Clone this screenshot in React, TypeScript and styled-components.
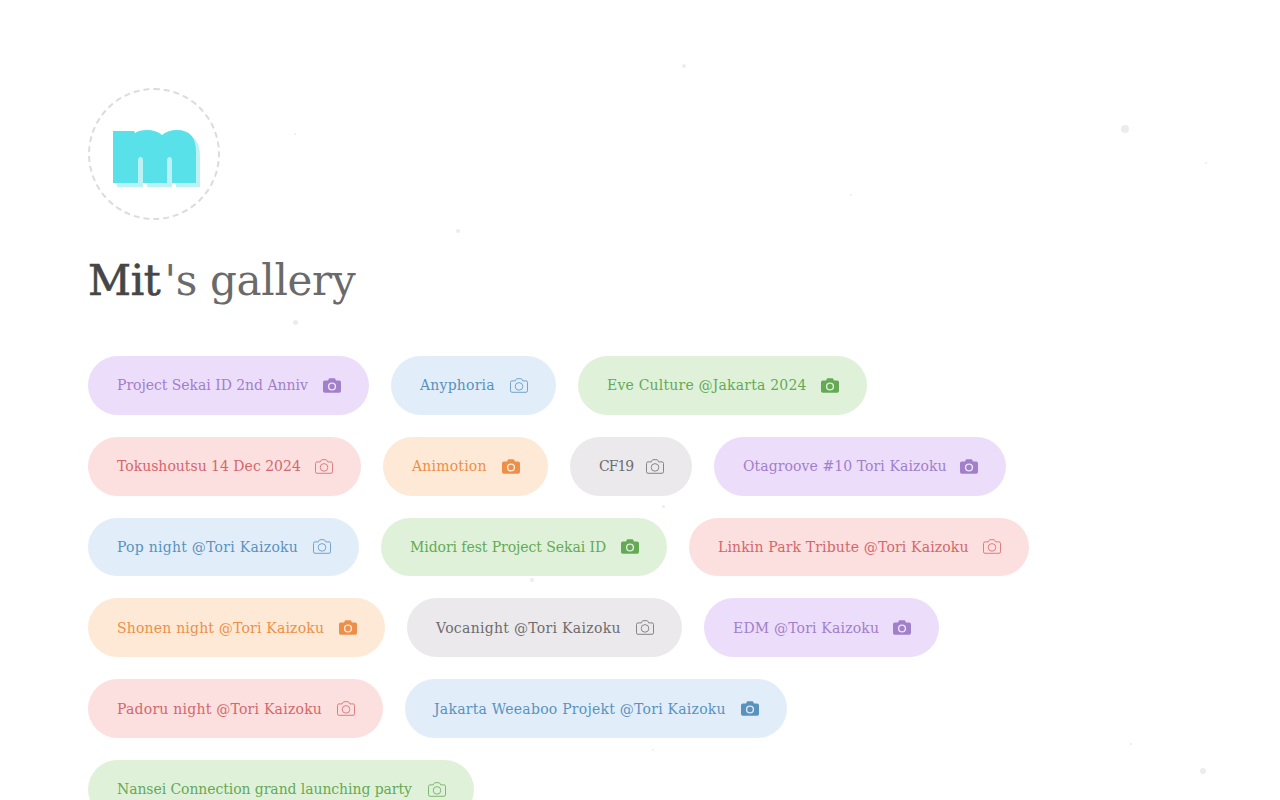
import React from "react";
import styled, { createGlobalStyle } from "styled-components";

type Tone = "purple" | "blue" | "green" | "red" | "orange" | "gray";

const tones: Record<Tone, { bg: string; fg: string }> = {
  purple: { bg: "#ecddfb", fg: "#a27fc9" },
  blue: { bg: "#e1eef9", fg: "#5a92bf" },
  green: { bg: "#e0f1da", fg: "#64aa55" },
  red: { bg: "#fcdfdf", fg: "#d2686c" },
  orange: { bg: "#fde9d5", fg: "#ec9049" },
  gray: { bg: "#ebe9ec", fg: "#6e6c6e" },
};

// tracking nudges each label to the width it has in the design
const galleries: { label: string; tone: Tone; solid: boolean; width: number; tracking: number }[] = [
  { label: "Project Sekai ID 2nd Anniv", tone: "purple", solid: true, width: 281, tracking: -0.04 },
  { label: "Anyphoria", tone: "blue", solid: false, width: 165, tracking: 0.2 },
  { label: "Eve Culture @Jakarta 2024", tone: "green", solid: true, width: 289, tracking: 0.2 },
  { label: "Tokushoutsu 14 Dec 2024", tone: "red", solid: false, width: 273, tracking: 0 },
  { label: "Animotion", tone: "orange", solid: true, width: 165, tracking: 0.2 },
  { label: "CF19", tone: "gray", solid: false, width: 122, tracking: -1 },
  { label: "Otagroove #10 Tori Kaizoku", tone: "purple", solid: true, width: 292, tracking: 0.08 },
  { label: "Pop night @Tori Kaizoku", tone: "blue", solid: false, width: 271, tracking: 0.26 },
  { label: "Midori fest Project Sekai ID", tone: "green", solid: true, width: 286, tracking: -0.07 },
  { label: "Linkin Park Tribute @Tori Kaizoku", tone: "red", solid: false, width: 340, tracking: 0.15 },
  { label: "Shonen night @Tori Kaizoku", tone: "orange", solid: true, width: 297, tracking: 0.19 },
  { label: "Vocanight @Tori Kaizoku", tone: "gray", solid: false, width: 275, tracking: 0.3 },
  { label: "EDM @Tori Kaizoku", tone: "purple", solid: true, width: 235, tracking: 0.18 },
  { label: "Padoru night @Tori Kaizoku", tone: "red", solid: false, width: 295, tracking: 0.23 },
  { label: "Jakarta Weeaboo Projekt @Tori Kaizoku", tone: "blue", solid: true, width: 382, tracking: 0.24 },
  { label: "Nansei Connection grand launching party", tone: "green", solid: false, width: 386, tracking: -0.08 },
];

const specks = [
  { x: 684, y: 66, size: 4 },
  { x: 295, y: 134, size: 2 },
  { x: 1125, y: 129, size: 8 },
  { x: 1206, y: 163, size: 2 },
  { x: 851, y: 195, size: 2 },
  { x: 458, y: 231, size: 4 },
  { x: 295, y: 322, size: 5 },
  { x: 663, y: 506, size: 3 },
  { x: 532, y: 580, size: 4 },
  { x: 653, y: 750, size: 2 },
  { x: 1131, y: 744, size: 2 },
  { x: 1203, y: 771, size: 6 },
];

const GlobalStyle = createGlobalStyle`
  html, body {
    margin: 0;
    height: 800px;
    overflow: hidden;
    background: #fff;
  }
`;

const Page = styled.main`
  position: relative;
  height: 800px;
  box-sizing: border-box;
  padding: 88px 88px 0;
  font-family: "DejaVu Serif", "Liberation Serif", serif;
  overflow: hidden;
`;

const Speck = styled.span<{ $size: number }>`
  position: absolute;
  width: ${(p) => p.$size}px;
  height: ${(p) => p.$size}px;
  margin: ${(p) => -p.$size / 2}px 0 0 ${(p) => -p.$size / 2}px;
  border-radius: 50%;
  background: #ececec;
  filter: blur(0.5px);
`;

const Avatar = styled.div`
  width: 132px;
  height: 132px;
  box-sizing: border-box;
  border: 2px dashed #dcdcdc;
  border-radius: 50%;
  display: flex;
  align-items: center;
  justify-content: center;
`;

const Title = styled.h1`
  margin: 32px 0 46px;
  height: 58px;
  font-size: 42px;
  line-height: 58px;
  font-weight: 400;
  color: #6a6a6a;
  letter-spacing: -0.3px;
`;

const TitleName = styled.span`
  color: #464646;
  -webkit-text-stroke: 0.7px #464646;
  margin-right: 4px;
`;

const PillList = styled.div`
  width: 1000px;
  display: flex;
  flex-wrap: wrap;
  gap: 22px;
`;

const Pill = styled.a<{ $tone: Tone; $width: number }>`
  width: ${(p) => p.$width}px;
  height: 58.8px;
  box-sizing: border-box;
  padding: 0 28px 0 29px;
  border-radius: 30px;
  display: flex;
  align-items: center;
  justify-content: space-between;
  background: ${(p) => tones[p.$tone].bg};
  color: ${(p) => tones[p.$tone].fg};
`;

const PillLabel = styled.span<{ $tracking: number }>`
  font-size: 14px;
  letter-spacing: ${(p) => p.$tracking}px;
  white-space: nowrap;
`;

const IconWrap = styled.span<{ $solid: boolean }>`
  display: flex;
  flex: none;
  opacity: ${(p) => (p.$solid ? 1 : 0.8)};
`;

const Logo = () => (
  <svg width="96" height="72" viewBox="0 0 96 72">
    <path
      transform="translate(4 4)"
      d="M7 13H28L29 15Q33 12 41 12Q50 12 56 17Q62 12 71 12Q90 12 90 34V65H66V43Q66 39 64 39Q62 39 62 43V65H37V43Q37 39 35 39Q33 39 33 43V65H7Z"
      fill="#bdf2f5"
    />
    <path
      d="M7 13H28L29 15Q33 12 41 12Q50 12 56 17Q62 12 71 12Q90 12 90 34V65H66V43Q66 39 63.5 39Q61 39 61 43V65H37V43Q37 39 34.5 39Q32 39 32 43V65H7Z"
      fill="#58e1e8"
    />
  </svg>
);

const CameraIcon = ({ solid }: { solid: boolean }) =>
  solid ? (
    <svg width="18" height="15" viewBox="0 0 18 15">
      <path
        d="M1.8 2.4H5L6 .6Q6.2.2 6.8.2H11.2Q11.8.2 12 .6L13 2.4H16.2Q18 2.4 18 4.2V13Q18 14.8 16.2 14.8H1.8Q0 14.8 0 13V4.2Q0 2.4 1.8 2.4Z"
        fill="currentColor"
      />
      <circle cx="9" cy="8.5" r="3.4" fill="none" stroke="#fff" strokeOpacity="0.8" strokeWidth="1.4" />
    </svg>
  ) : (
    <svg width="18" height="15" viewBox="0 0 18 15" fill="none" stroke="currentColor" strokeWidth="1">
      <path d="M2 2.9H5.3L6.3 1.1Q6.5.7 7 .7H11Q11.5.7 11.7 1.1L12.7 2.9H16Q17.5 2.9 17.5 4.4V12.8Q17.5 14.3 16 14.3H2Q.5 14.3 .5 12.8V4.4Q.5 2.9 2 2.9Z" />
      <circle cx="9" cy="8.4" r="3.8" />
    </svg>
  );

const App = () => (
  <Page>
    <GlobalStyle />
    {specks.map((s) => (
      <Speck key={`${s.x}-${s.y}`} $size={s.size} style={{ left: s.x, top: s.y }} />
    ))}
    <Avatar>
      <Logo />
    </Avatar>
    <Title>
      <TitleName>Mit</TitleName>'s gallery
    </Title>
    <PillList>
      {galleries.map((g) => (
        <Pill key={g.label} $tone={g.tone} $width={g.width}>
          <PillLabel $tracking={g.tracking}>{g.label}</PillLabel>
          <IconWrap $solid={g.solid}>
            <CameraIcon solid={g.solid} />
          </IconWrap>
        </Pill>
      ))}
    </PillList>
  </Page>
);

export default App;
